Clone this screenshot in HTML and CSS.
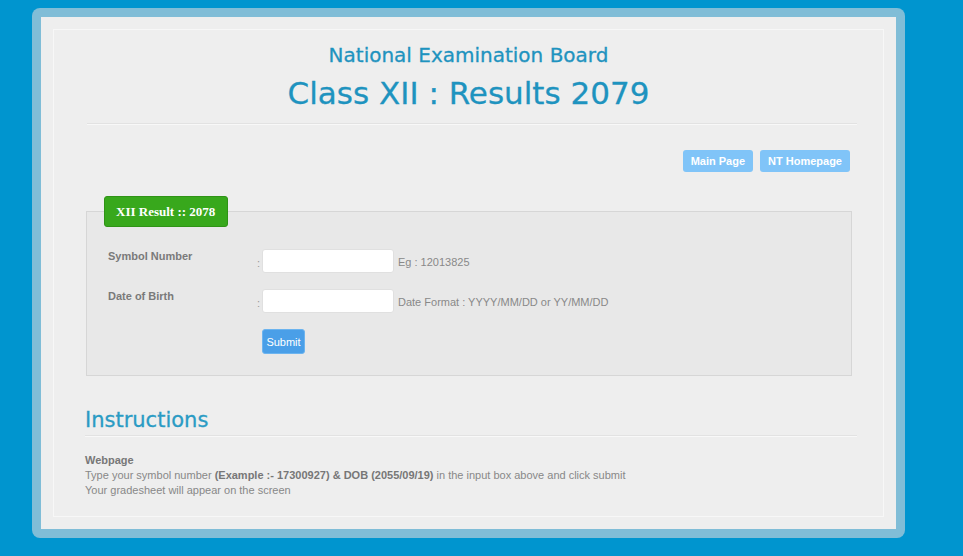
FILE: index.html
```html
<!DOCTYPE html>
<html lang="en">
<head>
<meta charset="utf-8">
<title>Class XII : Results 2079</title>
<link rel="stylesheet" href="styles.css">
</head>
<body>
<div class="frame">
  <div class="panel">
    <div class="box">
      <header class="head">
        <h2 class="board">National Examination Board</h2>
        <h1 class="title">Class XII : Results 2079</h1>
      </header>
      <div class="content">
        <hr class="rule">
        <nav class="links">
          <a class="link-btn" href="#">Main Page</a>
          <a class="link-btn" href="#">NT Homepage</a>
        </nav>
        <form class="result-form">
          <fieldset class="fs">
            <legend class="legend">XII Result :: 2078</legend>
            <div class="row">
              <label class="lbl">Symbol Number</label>
              <span class="colon">:</span>
              <input class="field" type="text">
              <span class="hint">Eg : 12013825</span>
            </div>
            <div class="row">
              <label class="lbl">Date of Birth</label>
              <span class="colon">:</span>
              <input class="field" type="text">
              <span class="hint">Date Format : YYYY/MM/DD or YY/MM/DD</span>
            </div>
            <div class="row submit-row">
              <button class="submit" type="button">Submit</button>
            </div>
          </fieldset>
        </form>
        <h3 class="instr">Instructions</h3>
        <hr class="rule rule2">
        <div class="notes">
          <b class="nb">Webpage</b><br>
          Type your symbol number <b>(Example :- 17300927) &amp; DOB (2055/09/19)</b> in the input box above and click submit<br>
          Your gradesheet will appear on the screen
        </div>
      </div>
    </div>
  </div>
</div>
</body>
</html>
```
FILE: styles.css
```css
html, body {
  margin: 0;
  padding: 0;
  background: #0095cf;
  height: 556px;
  overflow: hidden;
}
body {
  font-family: "Liberation Sans", Arial, sans-serif;
  font-size: 11px;
  color: #888;
}
.frame {
  margin: 8px 0 0 32px;
  width: 873px;
  height: 530px;
  box-sizing: border-box;
  padding: 9px;
  background: #80bdd7;
  border-radius: 8px;
}
.panel {
  height: 100%;
  box-sizing: border-box;
  padding: 12px;
  background: #eeeeee;
}
.box {
  height: 100%;
  box-sizing: border-box;
  border: 1px solid #f7f7f7;
}
.head {
  text-align: center;
  color: #1e93bf;
  font-family: "DejaVu Sans", Verdana, sans-serif;
  padding-top: 12px;
}
.board {
  margin: 0;
  font-size: 20px;
  font-weight: normal;
  line-height: 26px;
  -webkit-text-stroke: 0.3px #1e93bf;
}
.title {
  margin: 3px 0 0;
  font-size: 31px;
  font-weight: normal;
  line-height: 44px;
  -webkit-text-stroke: 0.3px #1e93bf;
}
.content {
  margin: 0 26px 0 32px;
}
.rule {
  margin: 8px 0 0 1px;
  border: 0;
  border-top: 1px solid #e2e2e2;
  border-bottom: 1px solid #f8f8f8;
  height: 0;
}
.links {
  display: flex;
  justify-content: flex-end;
  gap: 7px;
  margin: 25px 7px 0 0;
}
.link-btn {
  display: block;
  height: 22px;
  line-height: 22px;
  padding: 0 8px;
  background: #80c4f8;
  border-radius: 3px;
  color: #fff;
  font-weight: bold;
  font-size: 11px;
  text-decoration: none;
}
.result-form {
  margin: 24px 5px 0 0;
}
.fs {
  margin: 0;
  padding: 22px 17px 21px 21px;
  border: 1px solid #d6d6d6;
  background: #e8e8e8;
  min-width: 0;
}
.legend {
  padding: 0 12px 0 11px;
  height: 31px;
  line-height: 30px;
  box-sizing: border-box;
  background: #38a81c;
  border: 1px solid #2f9316;
  border-radius: 3px;
  color: #fff;
  font-family: "Liberation Serif", "Times New Roman", serif;
  font-weight: bold;
  font-size: 13px;
  margin-left: -4px;
}
.row {
  display: flex;
  align-items: flex-start;
  height: 24px;
  margin-bottom: 16px;
}
.lbl {
  width: 149px;
  font-weight: bold;
  color: #7a7a7a;
  line-height: 14px;
  margin-top: 0;
}
.colon {
  width: 5px;
  line-height: 14px;
  margin-top: 7px;
  color: #999;
}
.field {
  width: 132px;
  height: 24px;
  box-sizing: border-box;
  margin: 0;
  border: 1px solid #e0e0e0;
  border-radius: 3px;
  background: #fff;
}
.hint {
  margin: 6px 0 0 4px;
  line-height: 14px;
  color: #888;
}
.submit-row {
  padding-left: 154px;
  height: 25px;
  margin-bottom: 0;
}
.submit {
  height: 25px;
  width: 43px;
  padding: 0;
  border: 1px solid #6cb4ef;
  border-radius: 3px;
  background: #4a9fe8;
  color: #fff;
  font-family: "Liberation Sans", Arial, sans-serif;
  font-size: 11px;
}
.instr {
  margin: 32px 0 0 -1px;
  font-family: "DejaVu Sans", Verdana, sans-serif;
  font-size: 21px;
  font-weight: normal;
  line-height: 24px;
  color: #2a9bc4;
  -webkit-text-stroke: 0.3px #2a9bc4;
}
.rule2 {
  margin: 3px 0 0 -1px;
}
.notes {
  margin: 16px 0 0 -1px;
  line-height: 15px;
}
.notes b {
  color: #777;
}
```
